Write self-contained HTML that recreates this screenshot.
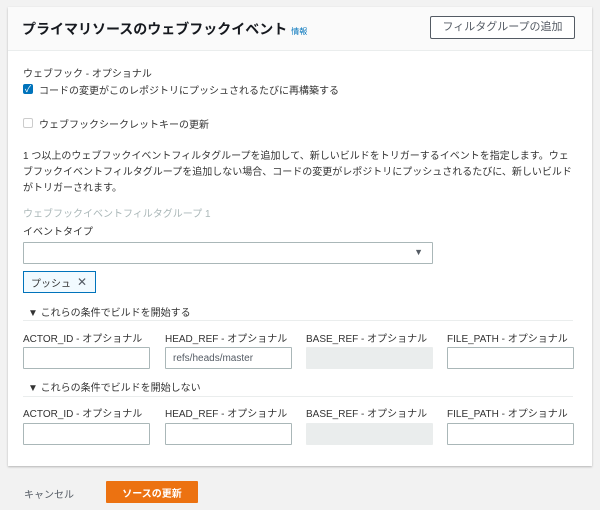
<!DOCTYPE html>
<html><head><meta charset="utf-8"><style>
*{box-sizing:border-box;margin:0;padding:0}
body{width:600px;height:510px;background:#f2f2f2;font-family:"Liberation Sans","Noto Sans CJK JP",sans-serif;color:#333;font-size:10px;position:relative;overflow:hidden}
.a{position:absolute;white-space:nowrap}
.card{position:absolute;left:8px;top:7px;width:584px;height:459px;background:#fff;box-shadow:0 1px 2px rgba(0,0,0,.25)}
.hdr{position:absolute;left:0;top:0;width:584px;height:44px;background:#fafafa;border-bottom:1px solid #eaeded}
.inp{position:absolute;height:22px;width:127px;border:1px solid #aab7b8;background:#fff;border-radius:1px}
.dis{background:#eaeded;border-color:#eaeded}
.line{position:absolute;left:23px;width:550px;height:1px;background:#eaeded}
</style></head><body>
<div class="card">
<div class="hdr"></div>
<div class="a" style="left:14px;top:12px;font-size:14px;font-weight:bold;color:#16191f">プライマリソースのウェブフックイベント <span style="font-size:8px;color:#0073bb;font-weight:normal">情報</span></div>
<div class="a" style="left:422px;top:9px;width:145px;height:23px;border:1px solid #545b64;background:#fff;border-radius:2px;text-align:center;line-height:21px;font-size:11px;color:#545b64">フィルタグループの追加</div>
</div>
<div class="a" style="left:23px;top:65px;font-size:10px">ウェブフック - オプショナル</div>
<div class="a" style="left:23px;top:84px;width:10px;height:10px;background:#0073bb;border-radius:2px;color:#fff;font-size:9px;line-height:10px;text-align:center">✓</div>
<div class="a" style="left:39px;top:82px">コードの変更がこのレポジトリにプッシュされるたびに再構築する</div>
<div class="a" style="left:23px;top:118px;width:10px;height:10px;border:1px solid #ccc;border-radius:2px"></div>
<div class="a" style="left:39px;top:116px">ウェブフックシークレットキーの更新</div>
<div class="a" style="left:23px;top:149px;line-height:16px;font-size:10px;white-space:normal;width:554px">1 つ以上のウェブフックイベントフィルタグループを追加して、新しいビルドをトリガーするイベントを指定します。ウェブフックイベントフィルタグループを追加しない場合、コードの変更がレポジトリにプッシュされるたびに、新しいビルドがトリガーされます。</div>
<div class="a" style="left:23px;top:205px;color:#aab7b8">ウェブフックイベントフィルタグループ 1</div>
<div class="a" style="left:23px;top:223px">イベントタイプ</div>
<div class="inp" style="left:23px;top:242px;width:410px;height:22px"><span class="a" style="right:9px;top:4px;font-size:9px;color:#545b64">▼</span></div>
<div class="a" style="left:23px;top:271px;width:73px;height:22px;border:1px solid #0073bb;background:#f1faff;padding-left:7px;display:flex;align-items:center">プッシュ <span style="font-size:12px;color:#545b64;margin-left:6px">✕</span></div>
<div class="a" style="left:28px;top:304px">▼ これらの条件でビルドを開始する</div>
<div class="line" style="top:320px"></div>
<div class="a" style="left:23px;top:330px">ACTOR_ID - オプショナル</div>
<div class="a" style="left:165px;top:330px">HEAD_REF - オプショナル</div>
<div class="a" style="left:306px;top:330px">BASE_REF - オプショナル</div>
<div class="a" style="left:447px;top:330px">FILE_PATH - オプショナル</div>
<div class="inp" style="left:23px;top:347px"></div>
<div class="inp" style="left:165px;top:347px;padding:5px 0 0 7px;color:#545b64">refs/heads/master</div>
<div class="inp dis" style="left:306px;top:347px"></div>
<div class="inp" style="left:447px;top:347px"></div>
<div class="a" style="left:28px;top:379px">▼ これらの条件でビルドを開始しない</div>
<div class="line" style="top:396px"></div>
<div class="a" style="left:23px;top:405px">ACTOR_ID - オプショナル</div>
<div class="a" style="left:165px;top:405px">HEAD_REF - オプショナル</div>
<div class="a" style="left:306px;top:405px">BASE_REF - オプショナル</div>
<div class="a" style="left:447px;top:405px">FILE_PATH - オプショナル</div>
<div class="inp" style="left:23px;top:423px"></div>
<div class="inp" style="left:165px;top:423px"></div>
<div class="inp dis" style="left:306px;top:423px"></div>
<div class="inp" style="left:447px;top:423px"></div>
<div class="a" style="left:24px;top:486px;color:#545b64">キャンセル</div>
<div class="a" style="left:106px;top:481px;width:92px;height:22px;background:#ec7211;color:#fff;font-weight:bold;display:flex;align-items:center;justify-content:center;border-radius:1px">ソースの更新</div>
</body></html>
